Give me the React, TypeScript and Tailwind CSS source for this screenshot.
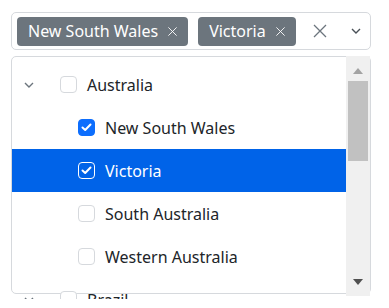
import React from 'react';

interface Row {
  label: string;
  level: number;
  checked: boolean;
  active?: boolean;
  expandable?: boolean;
}

const rows: Row[] = [
  { label: 'Australia', level: 0, checked: false, expandable: true },
  { label: 'New South Wales', level: 1, checked: true },
  { label: 'Victoria', level: 1, checked: true, active: true },
  { label: 'South Australia', level: 1, checked: false },
  { label: 'Western Australia', level: 1, checked: false },
  { label: 'Brazil', level: 0, checked: false, expandable: true },
];

const XIcon = ({ size, className }: { size: number; className?: string }) => (
  <svg width={size} height={size} viewBox="0 0 16 16" className={className}>
    <path d="M2 2 L14 14 M14 2 L2 14" stroke="currentColor" strokeWidth="1.3" fill="none" />
  </svg>
);

const Chevron = ({ className }: { className?: string }) => (
  <svg width="10" height="6" viewBox="0 0 10 6" className={className}>
    <path d="M1 1 L5 5 L9 1" stroke="currentColor" strokeWidth="1.4" fill="none" />
  </svg>
);

function Check({ checked, active }: { checked: boolean; active?: boolean }) {
  if (!checked) {
    return <span className="w-[17px] h-[17px] rounded-[4px] border border-[#d6d9dd] bg-white shrink-0" />;
  }
  return (
    <span
      className={
        'w-[17px] h-[17px] rounded-[4px] shrink-0 flex items-center justify-center ' +
        (active ? 'border border-white bg-[#0063e8]' : 'bg-[#0d6efd] border border-[#0d6efd]')
      }
    >
      <svg width="11" height="9" viewBox="0 0 11 9">
        <path d="M1.5 4.5 L4.2 7 L9.5 1.5" stroke="white" strokeWidth="2" fill="none" strokeLinecap="round" strokeLinejoin="round" />
      </svg>
    </span>
  );
}

function Tag({ label }: { label: string }) {
  return (
    <span className="h-[29px] flex items-center gap-[9px] pl-[11px] pr-[10px] rounded-[4px] bg-[#6c757d] text-white text-[16px]">
      {label}
      <XIcon size={11} className="text-white mt-[1px]" />
    </span>
  );
}

export default function App() {
  return (
    <div className="w-[389px] h-[308px] bg-white pt-[12px] pl-[11px] font-['Segoe_UI','Noto_Sans',sans-serif] text-[#212529] overflow-hidden">
      <div className="w-[360px] h-[38px] border border-[#d6d9dd] rounded-[5px] flex items-center pl-[5px]">
        <div className="flex items-center gap-[10px]">
          <Tag label="New South Wales" />
          <Tag label="Victoria" />
        </div>
        <XIcon size={16} className="text-[#6c757d] ml-[16px]" />
        <Chevron className="text-[#495057] ml-[23px]" />
      </div>

      <div className="mt-[6px] w-[360px] h-[238px] border border-[#d6d9dd] rounded-[5px] flex relative">
        <div className="flex-1 h-[242px] overflow-hidden">
          <div className="pt-[6px]">
            {rows.map((r) => (
              <div
                key={r.label}
                className={
                  'h-[43px] flex items-center text-[16px] ' +
                  (r.active ? 'bg-[#0063e8] text-white' : '')
                }
              >
                <span className="w-[48px] shrink-0 flex justify-start pl-[12px]">
                  {r.expandable && <Chevron className="text-[#6c757d]" />}
                </span>
                {r.level === 1 && <span className="w-[18px] shrink-0" />}
                <Check checked={r.checked} active={r.active} />
                <span className="ml-[10px]">{r.label}</span>
              </div>
            ))}
          </div>
        </div>
        <div className="w-[24px] h-[240px] -mt-px bg-[#f0f0f0] flex flex-col items-center">
          <svg width="10" height="6" viewBox="0 0 10 6" className="mt-[12px]">
            <path d="M0 6 L5 0 L10 6 Z" fill="#a3a3a3" />
          </svg>
          <div className="mt-[7px] w-[20px] h-[80px] bg-[#c1c1c1]" />
          <div className="flex-1" />
          <svg width="10" height="6" viewBox="0 0 10 6" className="mb-[11px]">
            <path d="M0 0 L10 0 L5 6 Z" fill="#505050" />
          </svg>
        </div>
      </div>
    </div>
  );
}
